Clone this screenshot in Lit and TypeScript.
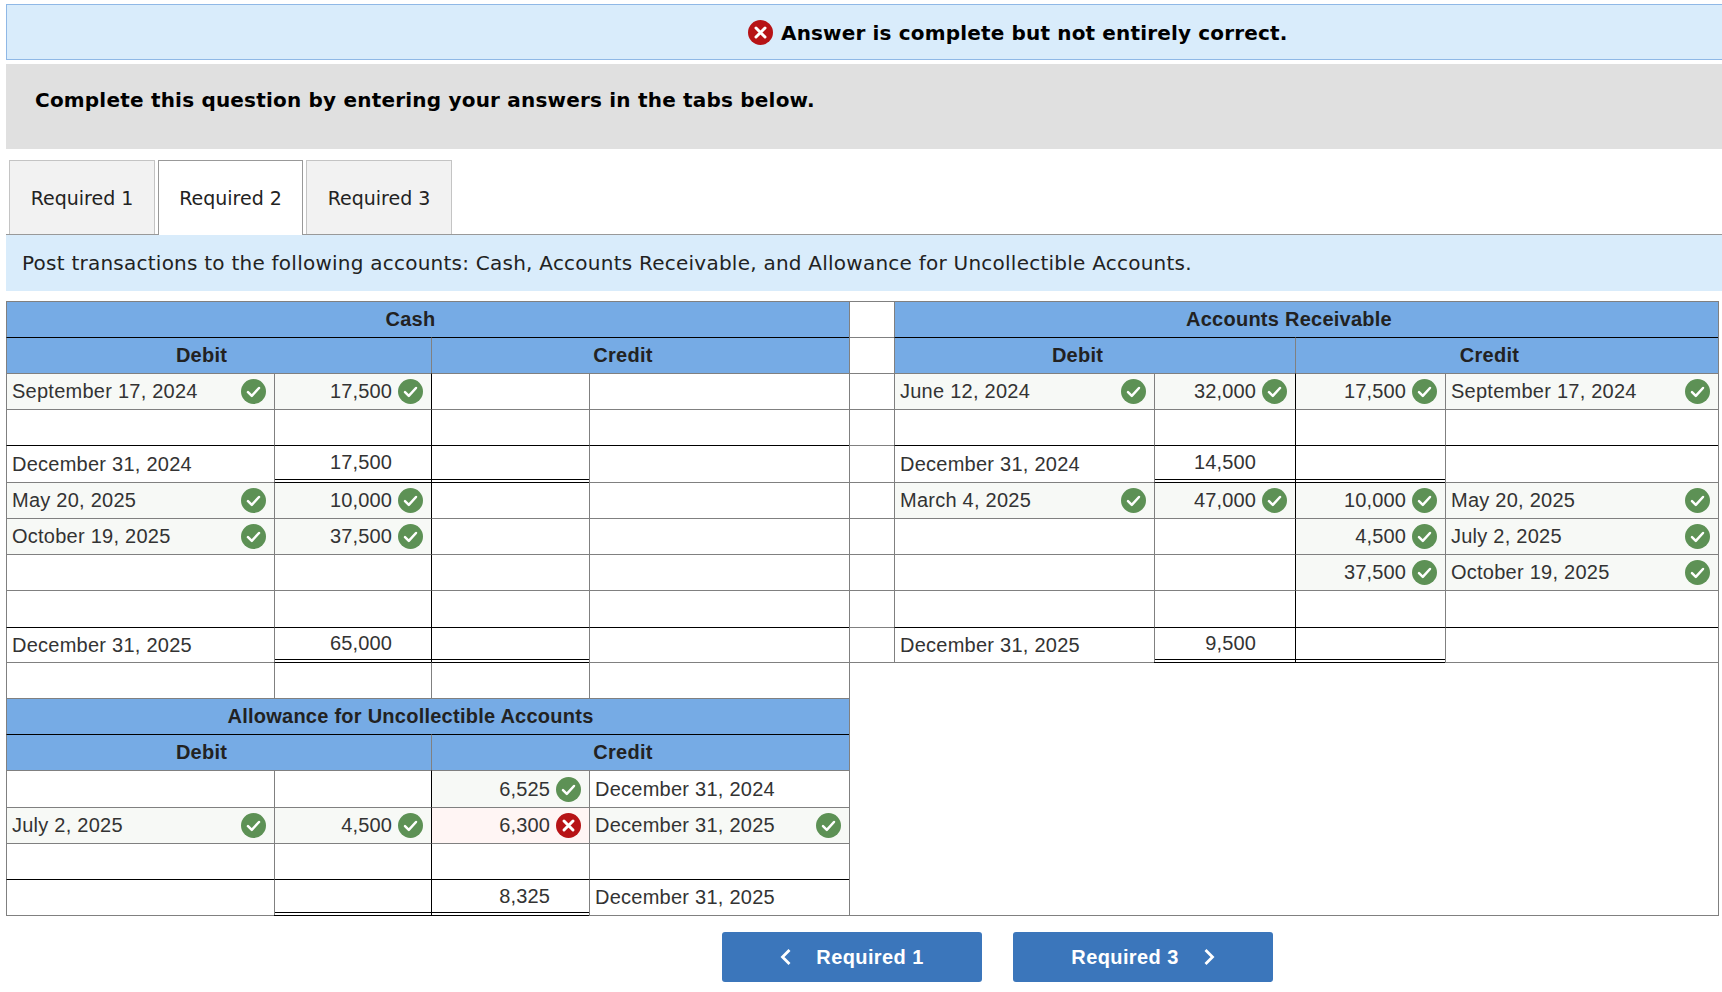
import { LitElement, html, css, svg } from "lit";
import { customElement } from "lit/decorators.js";

type St = "ok" | "bad" | undefined;
interface Cell {
  kind: "head" | "date" | "amt" | "gap" | "block";
  text?: string;
  st?: St;
  span?: number;
  rows?: number;
  k?: boolean; // black top
  lk?: boolean; // black left
  dbl?: boolean;
  last?: boolean;
  nl?: boolean; // no left border
}

const H = (text: string, span: number, k = false): Cell => ({ kind: "head", text, span, k });
const D = (text = "", st?: St, o: Partial<Cell> = {}): Cell => ({ kind: "date", text, st, ...o });
const A = (text = "", st?: St, o: Partial<Cell> = {}): Cell => ({ kind: "amt", text, st, ...o });
const G = (): Cell => ({ kind: "gap" });
const K = { k: true };
const LK = { lk: true };
const KL = { k: true, lk: true };
const DB = { dbl: true };

const cells: Cell[] = [
  // header rows
  H("Cash", 4), G(), H("Accounts Receivable", 4),
  H("Debit", 2, true), H("Credit", 2, true), G(), H("Debit", 2, true), H("Credit", 2, true),
  // 373
  D("September 17, 2024", "ok"), A("17,500", "ok"), A("", undefined, LK), D(), G(),
  D("June 12, 2024", "ok"), A("32,000", "ok"), A("17,500", "ok", LK), D("September 17, 2024", "ok"),
  // 409
  D(), A(), A("", undefined, LK), D(), G(), D(), A(), A("", undefined, LK), D(),
  // 445
  D("December 31, 2024", undefined, K), A("17,500", undefined, { k: true, dbl: true }), A("", undefined, { ...KL, ...DB }), D("", undefined, K), G(),
  D("December 31, 2024", undefined, K), A("14,500", undefined, { k: true, dbl: true }), A("", undefined, { ...KL, ...DB }), D("", undefined, K),
  // 482
  D("May 20, 2025", "ok"), A("10,000", "ok", K), A("", undefined, KL), D(), G(),
  D("March 4, 2025", "ok"), A("47,000", "ok", K), A("10,000", "ok", KL), D("May 20, 2025", "ok"),
  // 518
  D("October 19, 2025", "ok"), A("37,500", "ok"), A("", undefined, LK), D(), G(),
  D(), A(), A("4,500", "ok", LK), D("July 2, 2025", "ok"),
  // 554
  D(), A(), A("", undefined, LK), D(), G(),
  D(), A(), A("37,500", "ok", LK), D("October 19, 2025", "ok"),
  // 590
  D(), A(), A("", undefined, LK), D(), G(), D(), A(), A("", undefined, LK), D(),
  // 627
  D("December 31, 2025", undefined, K), A("65,000", undefined, { k: true, dbl: true }), A("", undefined, { ...KL, ...DB }), D("", undefined, K), G(),
  D("December 31, 2025", undefined, K), A("9,500", undefined, { k: true, dbl: true }), A("", undefined, { ...KL, ...DB }), D("", undefined, K),
  // 662
  D(), A("", undefined, K), A("", undefined, K), D(),
  { kind: "block", span: 2, rows: 7 }, { kind: "block", span: 2, rows: 7, k: true, nl: true }, { kind: "block", rows: 7, nl: true },
  // Allowance
  H("Allowance for Uncollectible Accounts", 4),
  H("Debit", 2, true), H("Credit", 2, true),
  D(), A(), A("6,525", "ok", LK), D("December 31, 2024"),
  D("July 2, 2025", "ok"), A("4,500", "ok"), A("6,300", "bad", LK), D("December 31, 2025", "ok"),
  D(), A(), A("", undefined, LK), D(),
  D("", undefined, K), A("", undefined, { k: true, dbl: true, last: true }), A("8,325", undefined, { ...KL, dbl: true, last: true }), D("December 31, 2025", undefined, K),
];

const okIcon = svg`<svg class="ico" viewBox="0 0 25 25"><circle cx="12.5" cy="12.5" r="12.5" fill="#5d9155"/><path d="M7 13.2l3.8 3.6L18 9" fill="none" stroke="#fff" stroke-width="2.5" stroke-linecap="round" stroke-linejoin="round"/></svg>`;
const badIcon = svg`<svg class="ico" viewBox="0 0 25 25"><circle cx="12.5" cy="12.5" r="12.5" fill="#b71316"/><path d="M8 8l9 9M17 8l-9 9" fill="none" stroke="#fff" stroke-width="3" stroke-linecap="round"/></svg>`;

@customElement("app-root")
export class AppRoot extends LitElement {
  static styles = css`
    :host {
      display: block;
      width: 1722px;
      height: 992px;
      box-sizing: border-box;
      padding: 4px 0 0 6px;
      overflow: hidden;
      background: #fff;
      color: #000;
      font-family: "DejaVu Sans", Verdana, sans-serif;
    }
    .banner {
      height: 56px;
      box-sizing: border-box;
      border: 1px solid #8fb8e6;
      border-right: 0;
      background: #d9ecfb;
      display: flex;
      align-items: center;
      gap: 8px;
      padding: 1px 0 0 741px;
      font-weight: 700;
      font-size: 20px;
      letter-spacing: 0.16px;
    }
    .ask {
      margin-top: 4px;
      height: 85px;
      box-sizing: border-box;
      padding: 22px 0 0 29px;
      background: #e0e0e0;
      font-weight: 700;
      font-size: 20px;
      letter-spacing: 0.2px;
      line-height: 28px;
    }
    .tabs {
      margin-top: 11px;
      height: 75px;
      box-sizing: border-box;
      padding-left: 3px;
      display: flex;
      gap: 3px;
      border-bottom: 1px solid #999;
    }
    .tab {
      width: 146px;
      height: 74px;
      box-sizing: border-box;
      border: 1px solid #c4c4c4;
      border-bottom: 0;
      background: #f2f2f2;
      display: flex;
      align-items: center;
      justify-content: center;
      font-size: 19px;
      color: #222;
    }
    .tab.on {
      width: 145px;
      height: 75px;
      padding-bottom: 1px;
      background: #fff;
      border-color: #999;
    }
    .strip {
      height: 56px;
      box-sizing: border-box;
      padding-left: 16px;
      background: #d9ecfb;
      display: flex;
      align-items: center;
      font-size: 20px;
      letter-spacing: 0.24px;
      color: #222;
    }
    .grid {
      margin-top: 10px;
      width: 1713px;
      box-sizing: border-box;
      display: grid;
      grid-template-columns: 268px 157px 158px 260px 45px 260px 141px 150px 273px;
      grid-template-rows: 36px 36px 36px 36px 37px 36px 36px 36px 37px 35px 36px 36px 36px 37px 36px 36px 36px;
      border-right: 1px solid #808080;
      border-bottom: 1px solid #808080;
      font-family: "Liberation Sans", Arial, sans-serif;
      font-size: 20px;
      color: #333;
    }
    .c {
      box-sizing: border-box;
      border-top: 1px solid #808080;
      border-left: 1px solid #808080;
      min-width: 0;
      display: flex;
      align-items: center;
      white-space: nowrap;
    }
    .c.k { border-top-color: #000; }
    .c.lk { border-left-color: #000; }
    .c.nl { border-left: 0; }
    .head {
      background: #76abe5;
      justify-content: center;
      padding-right: 35px;
      font-weight: 700;
      letter-spacing: 0.25px;
      color: #222;
    }
    .date {
      justify-content: space-between;
      padding: 0 8px 0 5px;
      letter-spacing: 0.25px;
    }
    .amt {
      justify-content: flex-end;
      gap: 6px;
      padding-right: 8px;
      letter-spacing: 0.15px;
    }
    .ok { background-color: #f7f9f6; }
    .bad { background-color: #fff5f4; }
    .dbl {
      padding-bottom: 3px;
      background-image: linear-gradient(#000, #000);
      background-repeat: no-repeat;
      background-size: 100% 1px;
      background-position: left 0 bottom 2px;
    }
    .last { box-shadow: 0 1px 0 #000; }
    .ico {
      width: 25px;
      height: 25px;
      flex: none;
      display: block;
    }
    .slot { width: 25px; flex: none; }
    .nav {
      margin: 16px 0 0 716px;
      display: flex;
      gap: 31px;
    }
    .btn {
      width: 260px;
      height: 50px;
      border: 0;
      border-radius: 3px;
      background: #3b76bb;
      color: #fff;
      font-family: "Liberation Sans", Arial, sans-serif;
      font-weight: 700;
      font-size: 20px;
      letter-spacing: 0.4px;
      display: flex;
      align-items: center;
      justify-content: center;
      gap: 25px;
      padding: 0;
    }
    .chev {
      width: 11px;
      height: 16px;
      flex: none;
      display: block;
    }
  `;

  private cell(c: Cell) {
    const cls = ["c", c.kind];
    if (c.k) cls.push("k");
    if (c.lk) cls.push("lk");
    if (c.nl) cls.push("nl");
    if (c.dbl) cls.push("dbl");
    if (c.last) cls.push("last");
    if (c.st) cls.push(c.st);
    const place = [
      c.span ? `grid-column: span ${c.span}` : "",
      c.rows ? `grid-row: span ${c.rows}` : "",
    ].filter(Boolean).join(";");
    const icon = c.st === "ok" ? okIcon : c.st === "bad" ? badIcon : null;
    if (c.kind === "amt") {
      return html`<div class=${cls.join(" ")} style=${place}>
        ${c.text ? html`<span>${c.text}</span>` : null}${icon ?? html`<span class="slot"></span>`}
      </div>`;
    }
    if (c.kind === "date") {
      return html`<div class=${cls.join(" ")} style=${place}><span>${c.text}</span>${icon}</div>`;
    }
    return html`<div class=${cls.join(" ")} style=${place}>${c.text ?? ""}</div>`;
  }

  render() {
    return html`
      <div class="banner">${badIcon}<span>Answer is complete but not entirely correct.</span></div>
      <div class="ask">Complete this question by entering your answers in the tabs below.</div>
      <div class="tabs">
        <div class="tab">Required 1</div>
        <div class="tab on">Required 2</div>
        <div class="tab">Required 3</div>
      </div>
      <div class="strip">Post transactions to the following accounts: Cash, Accounts Receivable, and Allowance for Uncollectible Accounts.</div>
      <div class="grid">${cells.map((c) => this.cell(c))}</div>
      <div class="nav">
        <button class="btn">
          <svg class="chev" viewBox="0 0 11 16"><path d="M9.5 1L2.5 8l7 7" fill="none" stroke="#fff" stroke-width="2.8"/></svg>
          <span>Required 1</span>
        </button>
        <button class="btn">
          <span>Required 3</span>
          <svg class="chev" viewBox="0 0 11 16"><path d="M1.5 1l7 7-7 7" fill="none" stroke="#fff" stroke-width="2.8"/></svg>
        </button>
      </div>
    `;
  }
}
